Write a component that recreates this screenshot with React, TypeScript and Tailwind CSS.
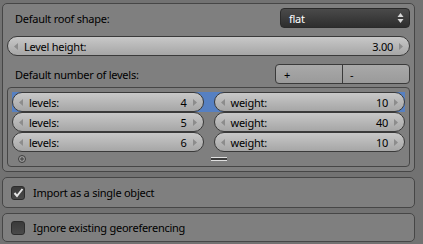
import React from "react";

const font = { fontFamily: '"Noto Sans", "DejaVu Sans", sans-serif', letterSpacing: "-0.25px" };

function ArrowL() {
  return (
    <svg width="4" height="7" viewBox="0 0 4 7" className="shrink-0">
      <path d="M4 0 L0 3.5 L4 7 Z" fill="#8c8c8c" />
    </svg>
  );
}

function ArrowR() {
  return (
    <svg width="4" height="7" viewBox="0 0 4 7" className="shrink-0">
      <path d="M0 0 L4 3.5 L0 7 Z" fill="#8c8c8c" />
    </svg>
  );
}

function NumField({ label, value }: { label: string; value: string }) {
  return (
    <div className="flex h-[20px] items-center rounded-full border border-[#3a3a3a] bg-gradient-to-b from-[#c8c8c8] to-[#a6a6a6] px-[6px] text-[11px] text-black">
      <ArrowL />
      <span className="ml-[6px] pt-[2px]">{label}</span>
      <span className="ml-auto mr-[6px] pt-[2px]">{value}</span>
      <ArrowR />
    </div>
  );
}

function Checkbox({ checked }: { checked?: boolean }) {
  return (
    <div className="flex h-[14px] w-[14px] items-center justify-center rounded-[3px] border border-[#2c2c2c] bg-gradient-to-b from-[#3a3a3a] to-[#4a4a4a]">
      {checked && (
        <svg width="11" height="10" viewBox="0 0 11 10">
          <path d="M1.5 5 L4 8 L9.5 1" stroke="#e6e6e6" strokeWidth="2" fill="none" />
        </svg>
      )}
    </div>
  );
}

export default function App() {
  const levels = [
    ["4", "10"],
    ["5", "40"],
    ["6", "10"],
  ];
  return (
    <div className="h-[244px] w-[423px] overflow-hidden bg-[#727272] pl-[2px] pt-[3px]" style={font}>
      {/* main settings box */}
      <div className="h-[169px] w-[413px] rounded-[5px] border border-[#464646] bg-[#7f7f7f] px-[4px] pt-[4px]">
        <div className="flex h-[20px] items-center">
          <span className="pl-[8px] pt-[2px] text-[11px] text-black">Default roof shape:</span>
          <div className="ml-auto flex h-[20px] w-[130px] items-center rounded-[4px] border border-[#2a2a2a] bg-gradient-to-b from-[#4a4a4a] to-[#2e2e2e] pl-[8px] pr-[5px] text-[11px] text-white">
            <span className="pt-[2px]">flat</span>
            <svg width="7" height="12" viewBox="0 0 7 12" className="ml-auto">
              <path d="M0.5 5 L3.5 1 L6.5 5 Z M0.5 7 L3.5 11 L6.5 7 Z" fill="#d8d8d8" />
            </svg>
          </div>
        </div>

        <div className="mt-[8px]">
          <NumField label="Level height:" value="3.00" />
        </div>

        <div className="mt-[8px] flex h-[20px] items-center">
          <span className="pl-[8px] pt-[2px] text-[11px] text-black">Default number of levels:</span>
          <div className="ml-auto flex h-[20px] w-[135px] rounded-[4px] border border-[#3a3a3a] bg-gradient-to-b from-[#a9a9a9] to-[#9a9a9a] text-[11px] text-black">
            <div className="flex w-[67px] items-center border-r border-[#3a3a3a] pl-[8px] pt-[2px]">+</div>
            <div className="flex flex-1 items-center pl-[7px] pt-[2px]">-</div>
          </div>
        </div>

        {/* levels list */}
        <div className="mt-[3px] h-[80px] rounded-[4px] border border-[#464646] bg-[#7f7f7f] px-[4px] pt-[4px]">
          <div className="flex flex-col">
            {levels.map(([l, w], i) => (
              <div key={i} className={`grid grid-cols-2 gap-[10px] ${i === 0 ? "bg-[#5680c2]" : ""}`}>
                <NumField label="levels:" value={l} />
                <NumField label="weight:" value={w} />
              </div>
            ))}
          </div>
          <div className="flex h-[13px] items-center">
            <svg width="8" height="8" viewBox="0 0 8 8" className="ml-[6px]">
              <circle cx="4" cy="4" r="3.5" fill="#9a9a9a" stroke="#3c3c3c" />
              <path d="M4 2 V6 M2 4 H6" stroke="#3c3c3c" strokeWidth="1" />
            </svg>
            <div className="ml-[185px] flex flex-col">
              <div className="h-[1px] w-[16px] bg-[#e0e0e0]" />
              <div className="h-[2px] w-[16px] bg-[#3c3c3c]" />
              <div className="h-[1px] w-[16px] bg-[#e0e0e0]" />
            </div>
          </div>
        </div>
      </div>

      <div className="mt-[5px] flex h-[31px] w-[413px] items-center rounded-[5px] border border-[#464646] bg-[#7f7f7f] pl-[8px]">
        <Checkbox checked />
        <span className="ml-[8px] pt-[2px] text-[11px] text-black">Import as a single object</span>
      </div>

      <div className="mt-[5px] flex h-[29px] w-[413px] items-center rounded-[5px] border border-[#464646] bg-[#7f7f7f] pl-[8px]">
        <Checkbox />
        <span className="ml-[8px] pt-[2px] text-[11px] text-black">Ignore existing georeferencing</span>
      </div>
    </div>
  );
}
